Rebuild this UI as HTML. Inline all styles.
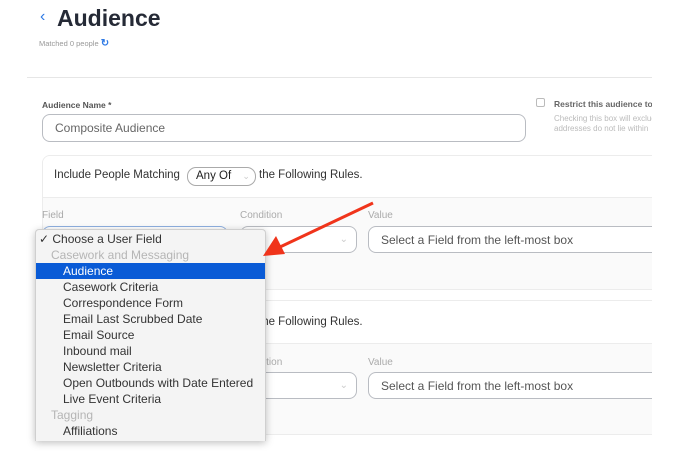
<!DOCTYPE html><html><head><style>
*{box-sizing:border-box;margin:0;padding:0}
body{width:691px;height:451px;overflow:hidden;background:#fff;font-family:"Liberation Sans",sans-serif;position:relative;color:#2a2f3a}
.a{position:absolute}
.inp{position:absolute;border:1px solid #b9bcc2;border-radius:8px;background:#fff;font-size:12px;color:#555;padding-left:12px;display:flex;align-items:center}
.lbl{position:absolute;font-size:10px;color:#aaa}
.dd{position:absolute;left:35px;top:229px;width:231px;height:212px;background:#f4f4f4;border:1px solid #cfcfcf;border-bottom:none;border-radius:4px 4px 0 0;box-shadow:0 2px 8px rgba(0,0,0,.25);font-size:12px;color:#333;overflow:hidden}
.dd div{height:16px;line-height:16px;padding-left:27px}
.dd .g{color:#b5b5b5;padding-left:15px}
.dd .s{background:#0a5bd6;color:#fff}
</style></head><body>
<div class="a" style="left:40px;top:8px;color:#2f7ae5;font-size:16px">‹</div>
<div class="a" style="left:57px;top:5px;font-size:23px;font-weight:bold;color:#252a36">Audience</div>
<div class="a" style="left:39px;top:38px;font-size:7.5px;color:#999">Matched 0 people <span style="color:#2f7ae5;font-size:10px;font-weight:bold">↻</span></div>
<div class="a" style="left:27px;top:77px;width:625px;height:1px;background:#e6e6e6"></div>
<div class="a" style="left:42px;top:100px;font-size:8.5px;font-weight:bold;color:#555">Audience Name *</div>
<div class="inp" style="left:42px;top:114px;width:484px;height:28px;color:#666">Composite Audience</div>
<div class="a" style="left:536px;top:98px;width:9px;height:9px;border:1px solid #bbb;border-radius:2px"></div>
<div class="a" style="left:554px;top:99px;font-size:8.5px;font-weight:bold;color:#666;white-space:nowrap;width:98px;overflow:hidden">Restrict this audience to</div>
<div class="a" style="left:554px;top:114px;font-size:8px;color:#bbb;line-height:10px;white-space:nowrap;width:98px;overflow:hidden">Checking this box will exclude<br>addresses do not lie within</div>
<div class="a" style="left:42px;top:155px;width:620px;height:135px;border:1px solid #ececec;border-radius:8px;background:#fafafa;overflow:hidden">
<div style="height:42px;background:#fff;border-bottom:1px solid #ececec"></div></div>
<div class="a" style="left:54px;top:169px;font-size:11.5px;color:#333">Include People Matching</div>
<div class="a" style="left:187px;top:167px;width:69px;height:19px;border:1px solid #aaa;border-radius:9px;font-size:11.5px;padding-left:8px;line-height:17px;color:#222">Any Of <span style="color:#ccc;font-size:9px;margin-left:8px">⌄</span></div>
<div class="a" style="left:259px;top:169px;font-size:11.5px;color:#333">the Following Rules.</div>
<div class="lbl" style="left:42px;top:210px">Field</div>
<div class="lbl" style="left:240px;top:210px">Condition</div>
<div class="lbl" style="left:368px;top:210px">Value</div>
<div class="inp" style="left:42px;top:226px;width:186px;height:27px;border-color:#8fb0e0"></div>
<div class="inp" style="left:240px;top:226px;width:117px;height:27px"><span style="position:absolute;right:8px;color:#ccc;font-size:10px">⌄</span></div>
<div class="inp" style="left:368px;top:226px;width:300px;height:27px">Select a Field from the left-most box</div>
<div class="a" style="left:42px;top:300px;width:620px;height:135px;border:1px solid #ececec;border-radius:8px;background:#fafafa;overflow:hidden">
<div style="height:43px;background:#fff;border-bottom:1px solid #ececec"></div></div>
<div class="a" style="left:259px;top:316px;font-size:11.5px;color:#333">the Following Rules.</div>
<div class="lbl" style="left:240px;top:357px">Condition</div>
<div class="lbl" style="left:368px;top:357px">Value</div>
<div class="inp" style="left:240px;top:372px;width:117px;height:27px"><span style="position:absolute;right:8px;color:#ccc;font-size:10px">⌄</span></div>
<div class="inp" style="left:368px;top:372px;width:300px;height:27px">Select a Field from the left-most box</div>
<div class="a" style="left:652px;top:0;width:39px;height:451px;background:#fff"></div>
<div class="a" style="left:0;top:441px;width:691px;height:10px;background:#fff"></div>
<div class="dd" style="padding-top:1px">
<div style="padding-left:3px">✓ Choose a User Field</div>
<div class="g">Casework and Messaging</div>
<div class="s">Audience</div>
<div>Casework Criteria</div>
<div>Correspondence Form</div>
<div>Email Last Scrubbed Date</div>
<div>Email Source</div>
<div>Inbound mail</div>
<div>Newsletter Criteria</div>
<div>Open Outbounds with Date Entered</div>
<div>Live Event Criteria</div>
<div class="g">Tagging</div>
<div>Affiliations</div>
</div>
<svg class="a" style="left:0;top:0" width="691" height="451"><line x1="373" y1="203" x2="280" y2="247" stroke="#f0341b" stroke-width="3"/><polygon points="263,256 276,236 285,254" fill="#f0341b"/></svg>
</body></html>
